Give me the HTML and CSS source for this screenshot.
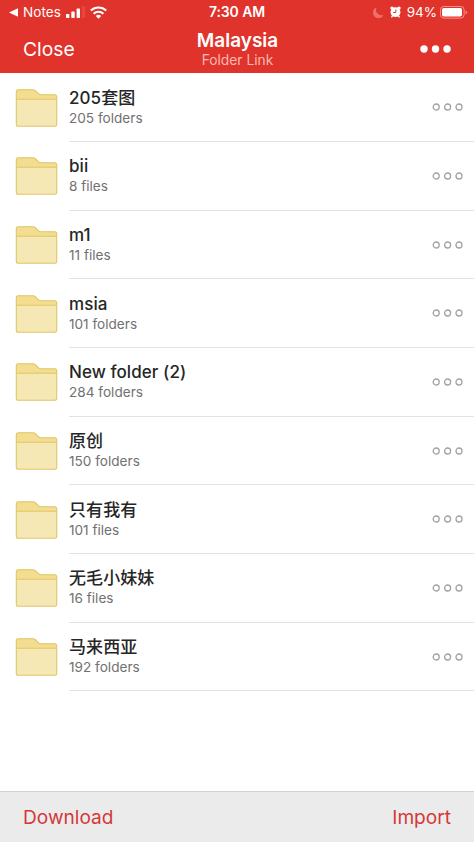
FILE: index.html
```
<!DOCTYPE html>
<html lang="en">
<head>
  <meta charset="UTF-8" />
  <meta name="viewport" content="width=device-width, initial-scale=1.0"/>
  <title>Malaysia</title>
  <link rel="stylesheet" href="styles.css">
</head>
<body>
  <svg width="0" height="0" class="defs">
    <symbol id="folder" viewBox="0 0 42 38">
      <path d="M.8 35.2V2.8q0-2 2-2h14.7q1.4 0 2.3.9l3.2 3.2q.9.9 2.3.9h13.9q2 0 2 2v27.4q0 2-2 2H2.8q-2 0-2-2z" fill="#f5e8b4"/>
      <path d="M.8 10.2V2.8q0-2 2-2h14.7q1.4 0 2.3.9l3.2 3.2q.9.9 2.3.9h13.9q2 0 2 2v2.4z" fill="#f2dd90"/>
      <path d="M.8 35.2V2.8q0-2 2-2h14.7q1.4 0 2.3.9l3.2 3.2q.9.9 2.3.9h13.9q2 0 2 2v27.4q0 2-2 2H2.8q-2 0-2-2zM.8 10.2h40.4" fill="none" stroke="#dfc767" stroke-width="1.1"/>
    </symbol>
    <symbol id="more" viewBox="0 0 32 8">
      <g fill="none" stroke="#a2a2a2" stroke-width="1.3">
        <circle cx="4.2" cy="4" r="3"/>
        <circle cx="15.6" cy="4" r="3"/>
        <circle cx="27" cy="4" r="3"/>
      </g>
    </symbol>
  </svg>

  <div class="app">
    <header>
      <div class="status">
        <div class="status-left">
          <svg class="back" width="9" height="9" viewBox="0 0 9 9"><path d="M0 4.5 9 .3v8.4z" fill="#fff"/></svg>
          <span class="notes">Notes</span>
          <svg class="signal" width="20" height="12" viewBox="0 0 20 12" fill="#fff">
            <rect x="0" y="8" width="3.4" height="4" rx=".7"/>
            <rect x="5.3" y="5.5" width="3.4" height="6.5" rx=".7"/>
            <rect x="10.6" y="2.5" width="3.4" height="9.5" rx=".7"/>
            <rect x="15.9" y="0" width="3.4" height="12" rx=".7" opacity=".1"/>
          </svg>
          <svg class="wifi" width="17" height="13" viewBox="0 0 17 13">
            <g fill="none" stroke="#fff" stroke-width="2.1">
              <path d="M.8 4.6a11 11 0 0 1 15.4 0"/>
              <path d="M3.6 7.7a7 7 0 0 1 9.8 0"/>
            </g>
            <path d="M8.5 12.8 5.8 10a3.9 3.9 0 0 1 5.4 0z" fill="#fff"/>
          </svg>
        </div>
        <span class="time">7:30 AM</span>
        <div class="status-right">
          <svg class="moon" width="11" height="11" viewBox="0 0 11 11"><path d="M3.8.4a5.5 5.5 0 1 0 6.8 7.3A5.2 5.2 0 0 1 3.8.4z" fill="#ef7068"/></svg>
          <svg class="alarm" width="11" height="12" viewBox="0 0 11 12">
            <g fill="#fff">
              <circle cx="5.5" cy="6.2" r="4.9"/>
              <circle cx="2" cy="2.1" r="1.7"/>
              <circle cx="9" cy="2.1" r="1.7"/>
            </g>
            <path d="m2.6 9.8-1.2 1.6m7-1.6 1.2 1.6" stroke="#fff" stroke-width="1.4"/>
            <path d="M5.8 3.5v3H3.2" fill="none" stroke="#e0332b" stroke-width="1"/>
          </svg>
          <span class="percent">94%</span>
          <svg class="battery" width="28" height="13" viewBox="0 0 28 13">
            <rect x=".5" y=".5" width="23.6" height="11.6" rx="3.3" fill="none" stroke="#f1948c"/>
            <rect x="2" y="2" width="20" height="8.6" rx="1.8" fill="#fff"/>
            <path d="M25.5 4.2q1.6.8 1.6 2.1t-1.6 2.1z" fill="#f1948c"/>
          </svg>
        </div>
      </div>
      <nav>
        <a class="close">Close</a>
        <div class="heading">
          <h1>Malaysia</h1>
          <p>Folder Link</p>
        </div>
        <svg class="menu" width="32" height="8" viewBox="0 0 32 8" fill="#fff">
          <circle cx="4" cy="4" r="3.7"/>
          <circle cx="15.5" cy="4" r="3.7"/>
          <circle cx="27" cy="4" r="3.7"/>
        </svg>
      </nav>
    </header>

    <ul class="list">
      <li>
        <svg class="folder"><use href="#folder"/></svg>
        <div class="row"><div><h2>205套图</h2><p>205 folders</p></div><svg class="more"><use href="#more"/></svg></div>
      </li>
      <li>
        <svg class="folder"><use href="#folder"/></svg>
        <div class="row"><div><h2>bii</h2><p>8 files</p></div><svg class="more"><use href="#more"/></svg></div>
      </li>
      <li>
        <svg class="folder"><use href="#folder"/></svg>
        <div class="row"><div><h2>m1</h2><p>11 files</p></div><svg class="more"><use href="#more"/></svg></div>
      </li>
      <li>
        <svg class="folder"><use href="#folder"/></svg>
        <div class="row"><div><h2>msia</h2><p>101 folders</p></div><svg class="more"><use href="#more"/></svg></div>
      </li>
      <li>
        <svg class="folder"><use href="#folder"/></svg>
        <div class="row"><div><h2>New folder (2)</h2><p>284 folders</p></div><svg class="more"><use href="#more"/></svg></div>
      </li>
      <li>
        <svg class="folder"><use href="#folder"/></svg>
        <div class="row"><div><h2>原创</h2><p>150 folders</p></div><svg class="more"><use href="#more"/></svg></div>
      </li>
      <li>
        <svg class="folder"><use href="#folder"/></svg>
        <div class="row"><div><h2>只有我有</h2><p>101 files</p></div><svg class="more"><use href="#more"/></svg></div>
      </li>
      <li>
        <svg class="folder"><use href="#folder"/></svg>
        <div class="row"><div><h2>无毛小妹妹</h2><p>16 files</p></div><svg class="more"><use href="#more"/></svg></div>
      </li>
      <li>
        <svg class="folder"><use href="#folder"/></svg>
        <div class="row"><div><h2>马来西亚</h2><p>192 folders</p></div><svg class="more"><use href="#more"/></svg></div>
      </li>
    </ul>

    <footer>
      <a>Download</a>
      <a>Import</a>
    </footer>
  </div>
</body>
</html>
```
FILE: styles.css
```
* {
  box-sizing: border-box;
  margin: 0;
  padding: 0;
}
body {
  font-family: Inter, "Noto Sans CJK SC", sans-serif;
  background: #fff;
  color: #262626;
}
svg {
  display: block;
  flex-shrink: 0;
}
.defs {
  position: absolute;
}
.app {
  display: flex;
  flex-direction: column;
  height: 842px;
}
header {
  height: 73px;
  background: #e0332b;
  color: #fff;
}
.status {
  display: grid;
  grid-template-columns: 1fr auto 1fr;
  align-items: center;
  height: 24px;
  padding: 0 6px 0 9px;
  font-size: 13.5px;
  line-height: 24px;
}
.status-left, .status-right {
  display: flex;
  align-items: center;
}
.status-right {
  justify-content: flex-end;
}
.notes {
  margin-left: 5px;
  letter-spacing: 0.1px;
}
.signal {
  margin-left: 5px;
}
.wifi {
  margin-left: 4px;
}
.time {
  font-size: 14px;
  font-weight: 600;
  letter-spacing: -0.1px;
  margin-right: 3px;
}
.alarm {
  margin-left: 6px;
}
.percent {
  margin: 0 3px 0 6px;
}
nav {
  display: grid;
  grid-template-columns: 1fr auto 1fr;
  align-items: center;
  height: 49px;
  padding: 0 22px 0 23px;
}
.close {
  font-size: 19.3px;
}
.heading {
  text-align: center;
}
h1 {
  font-size: 19px;
  font-weight: 600;
  line-height: 22px;
}
.heading p {
  font-size: 13.8px;
  line-height: 16px;
  color: #f8b9b3;
}
.menu {
  justify-self: end;
}
.list {
  flex: 1;
  list-style: none;
  padding-top: 0.5px;
}
li {
  display: flex;
  align-items: center;
  height: 68.67px;
  padding-left: 15px;
}
.folder {
  width: 43px;
  height: 38px;
}
.row {
  flex: 1;
  display: flex;
  align-items: center;
  justify-content: space-between;
  height: 100%;
  margin-left: 11px;
  padding-right: 10px;
  border-bottom: 1px solid #e2e2e2;
}
h2 {
  font-size: 17px;
  font-weight: 500;
  line-height: 22px;
  letter-spacing: 0.07px;
}
.row p {
  font-size: 13.6px;
  line-height: 19px;
  color: #717171;
}
.more {
  width: 32px;
  height: 8px;
}
footer {
  display: flex;
  align-items: center;
  justify-content: space-between;
  height: 51px;
  padding: 0 23px;
  background: #ebebeb;
  border-top: 1px solid #d2d2d2;
  font-size: 19.1px;
  color: #d3383a;
}
```
